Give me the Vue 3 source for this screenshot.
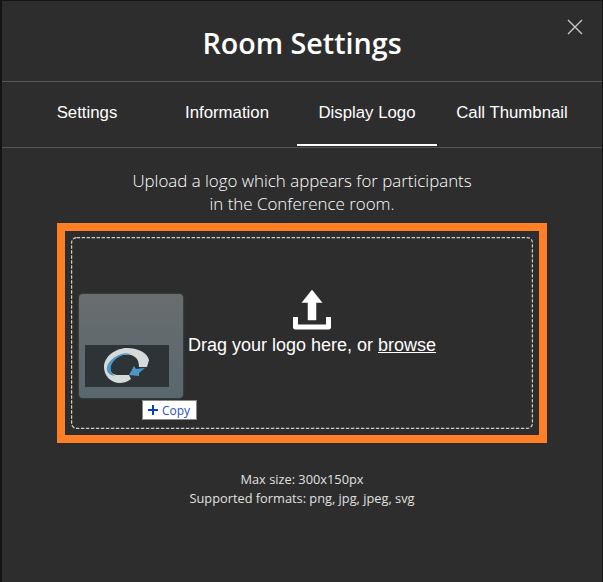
<template>
  <div class="page">
    <div class="modal">
      <header class="head">
        <h1>Room Settings</h1>
        <svg class="close" width="16" height="16" viewBox="0 0 16 16">
          <path d="M1 1 L15 15 M15 1 L1 15" stroke="#c9c9c9" stroke-width="1.4" fill="none" />
        </svg>
      </header>
      <nav class="tabs">
        <div v-for="t in tabs" :key="t" class="tab" :class="{ active: t === 'Display Logo' }">{{ t }}</div>
      </nav>
      <p class="intro">Upload a logo which appears for participants<br />in the Conference room.</p>
      <div class="highlight">
        <div class="drop">
          <svg class="dash" width="462" height="192" viewBox="0 0 462 192">
            <rect x="0.6" y="0.6" width="460.8" height="190.8" rx="5" fill="none" stroke="#cfcfcf" stroke-width="1.2" stroke-dasharray="3.4 1.6" />
          </svg>
          <svg class="upload" width="38" height="40" viewBox="0 0 38 40">
            <path d="M19 0 L29 12.5 L23 12.5 L23 30 L15 30 L15 12.5 L9 12.5 Z" fill="#fff" stroke="#fff" stroke-width="0.5" stroke-linejoin="round" />
            <path d="M2.5 27 V37 H35.5 V27" stroke="#fff" stroke-width="5" fill="none" stroke-linejoin="round" />
          </svg>
          <div class="drop-text">Drag your logo here, or <u>browse</u></div>

          <div class="ghost">
            <svg class="ghost-logo" width="84" height="42" viewBox="0 0 84 42">
              <rect width="84" height="42" fill="#2d3336" />
              <path d="M42 3 C52 3 62 7 64 15 L62 22 L54 22 C54 16 52 12 46 10 C36 8 26 14 25 22 C25 26 26 29 32 30 L44 30 L46 34 C42 37 38 38 35 38 C26 38 19 31 19 22 C19 12 30 3 42 3 Z" fill="#d6dadb" />
              <path d="M46 8 C36 7 24 13 22 22 C21 27 24 30 30 31 C27 29 25 26 26 21 C28 14 37 9 46 8 Z" fill="#4b97c8" />
              <path d="M44 30 L49 21 L51 24 L60 23 L54 28 L54 31 Z" fill="#4b97c8" />
            </svg>
          </div>
          <div class="copy-badge">
            <svg width="10" height="10" viewBox="0 0 10 10"><path d="M5 0 V10 M0 5 H10" stroke="#0a3fc4" stroke-width="2" /></svg>
            <span>Copy</span>
          </div>
        </div>
      </div>
      <div class="limits">
        <div>Max size: 300x150px</div>
        <div>Supported formats: png, jpg, jpeg, svg</div>
      </div>
    </div>
  </div>
</template>

<script setup>
const tabs = ['Settings', 'Information', 'Display Logo', 'Call Thumbnail']
</script>

<style>
html, body { margin: 0; background: #141414; overflow: hidden; }
</style>

<style scoped>
.page {
  width: 603px;
  height: 582px;
  box-sizing: border-box;
  padding: 1px 1px 0 2px;
  background: #141414;
}
.modal {
  height: 100%;
  background: #2d2d2d;
  color: #fff;
  font-family: "Liberation Sans", Arial, sans-serif;
  display: flex;
  flex-direction: column;
}
.head {
  position: relative;
  height: 80px;
  flex: none;
  display: flex;
  align-items: center;
  justify-content: center;
  border-bottom: 1px solid #555;
}
.head h1 {
  margin: 2px 0 0;
  font: 600 28.7px "Open Sans", sans-serif;
  color: #fff;
}
.close {
  position: absolute;
  right: 19px;
  top: 18px;
}
.tabs {
  display: flex;
  height: 65px;
  flex: none;
  padding-left: 15px;
  border-bottom: 1px solid #555;
}
.tab {
  width: 140px;
  flex: none;
  box-sizing: border-box;
  padding-top: 21px;
  text-align: center;
  font-size: 16.8px;
  line-height: 20px;
  white-space: nowrap;
}
.tab:last-child { width: 150px; }
.tab.active { border-bottom: 2px solid #fff; height: 64px; }
.intro {
  margin: 21px 0 0;
  text-align: center;
  font: 300 16.9px/23px "Open Sans", sans-serif;
  color: #fff;
}
.highlight {
  margin: 8px 0 0 55px;
  width: 490px;
  height: 220px;
  box-sizing: border-box;
  border: 8px solid #ff7f27;
  padding: 6px;
}
.drop {
  position: relative;
  height: 100%;
  box-sizing: border-box;
  display: flex;
  flex-direction: column;
  align-items: center;
  padding-top: 53px;
}
.dash {
  position: absolute;
  left: 0;
  top: 0;
}
.upload { margin-left: 20px; }
.drop-text {
  margin: 5px 0 0 20px;
  font-size: 18px;
  line-height: 20px;
  white-space: nowrap;
}
.ghost {
  position: absolute;
  left: 8px;
  top: 57px;
  width: 104px;
  height: 104px;
  border-radius: 4px;
  background: linear-gradient(#6a6d6e, #58676f);
  box-shadow: 0 0 2px rgba(90, 120, 130, 0.8);
}
.ghost-logo {
  position: absolute;
  left: 6px;
  top: 51px;
}
.copy-badge {
  position: absolute;
  left: 71px;
  top: 163px;
  width: 55px;
  height: 20px;
  box-sizing: border-box;
  display: flex;
  align-items: center;
  gap: 4px;
  padding-left: 5px;
  background: #fff;
  border: 1px solid #8a8a8a;
  color: #2a52c9;
  font: 400 12px "Open Sans", sans-serif;
}
.limits {
  margin-top: 27px;
  text-align: center;
  font: 400 12.8px/19px "Open Sans", sans-serif;
  color: #e0e0e0;
}
</style>
